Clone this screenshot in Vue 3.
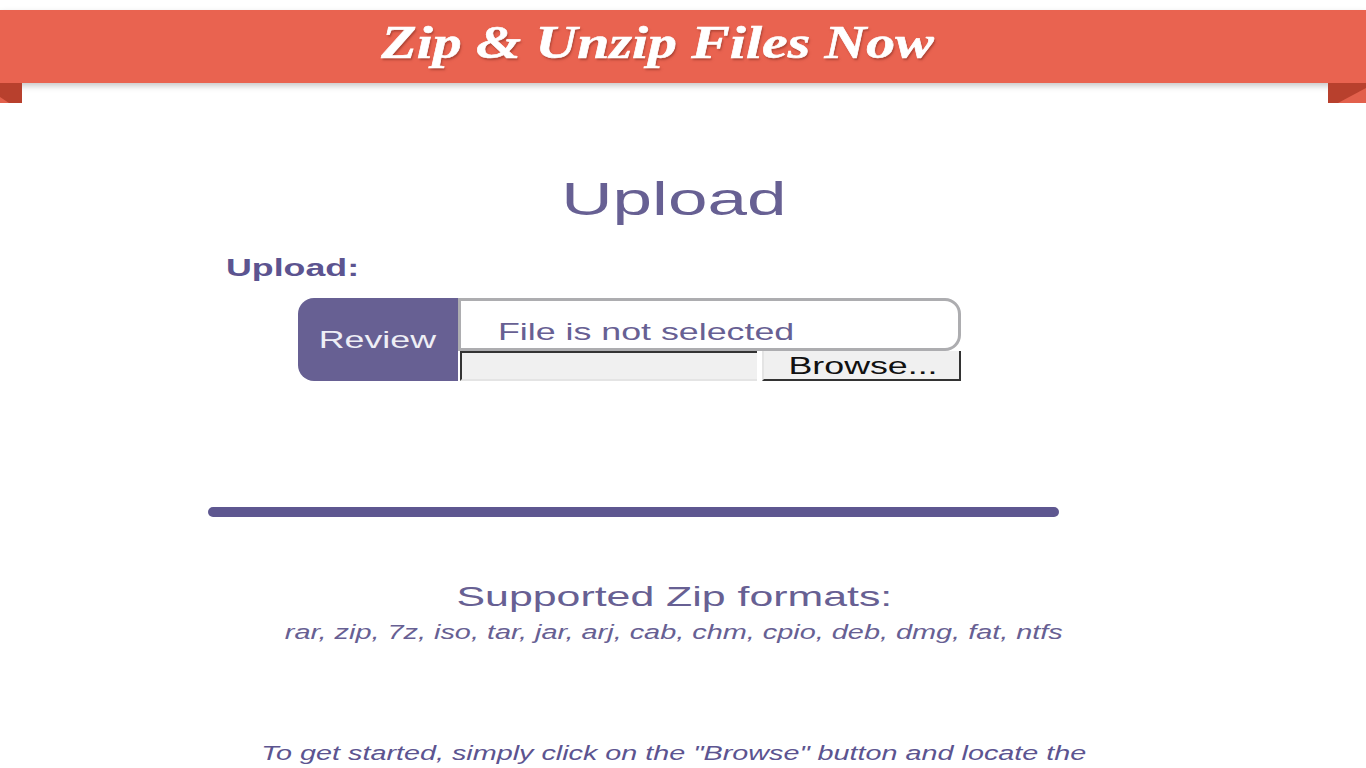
<template>
  <div class="page">
    <header class="banner">
      <h1 class="banner-title">Zip &amp; Unzip Files Now</h1>
      <svg class="fold fold-left" viewBox="0 0 22 20" preserveAspectRatio="none">
        <rect width="22" height="20" fill="#b8402d" />
        <polygon points="0,14 9,20 0,20" fill="#e2604c" />
      </svg>
      <svg class="fold fold-right" viewBox="0 0 38 20" preserveAspectRatio="none">
        <rect width="38" height="20" fill="#b8402d" />
        <polygon points="10,20 38,5 38,20" fill="#e2604c" />
      </svg>
    </header>

    <main class="content">
      <h2 class="heading"><span class="wide">Upload</span></h2>
      <div class="label"><span class="wide wide-left">Upload:</span></div>

      <div class="uploader">
        <div class="review"><span class="wide">Review</span></div>
        <div class="file-column">
          <div class="file-name"><span class="wide wide-left">File is not selected</span></div>
          <div class="file-input">
            <div class="file-field"></div>
            <div class="browse"><span class="wide">Browse...</span></div>
          </div>
        </div>
      </div>

      <div class="rule"></div>

      <h3 class="formats-title"><span class="wide">Supported Zip formats:</span></h3>
      <p class="formats"><span class="wide">rar, zip, 7z, iso, tar, jar, arj, cab, chm, cpio, deb, dmg, fat, ntfs</span></p>
      <p class="intro"><span class="wide">To get started, simply click on the "Browse" button and locate the</span></p>
    </main>
  </div>
</template>

<script setup>
</script>

<style>
html, body { margin: 0; background: #fff; }
</style>

<style scoped>
.page {
  width: 1366px;
  height: 768px;
  overflow: hidden;
  background: #fff;
  font-family: "Liberation Sans", Arial, sans-serif;
  color: #676093;
  padding-top: 10px;
  box-sizing: border-box;
}
.wide {
  display: inline-block;
  white-space: nowrap;
  transform: scaleX(1.49);
  transform-origin: center;
}
.wide-left { transform-origin: left center; }

.banner {
  position: relative;
  height: 73px;
  background: #e96350;
  box-shadow: 0 3px 6px rgba(0, 0, 0, 0.22);
  display: flex;
  align-items: center;
  justify-content: center;
}
.banner-title {
  margin: 0 0 10px -51px;
  font-family: "Liberation Serif", serif;
  font-style: italic;
  font-weight: 700;
  font-size: 47px;
  line-height: 64px;
  color: #fff;
  white-space: nowrap;
  -webkit-text-stroke: 0.6px #fff;
  text-shadow: 1px 2px 2px rgba(120, 40, 30, 0.55);
  transform: scaleX(1.23);
}
.fold {
  position: absolute;
  top: 73px;
  height: 20px;
  display: block;
}
.fold-left { left: 0; width: 22px; }
.fold-right { right: 0; width: 38px; }

.content {
  width: 932px;
  margin-left: 208px;
}
.heading {
  margin: 0;
  padding-top: 88px;
  text-align: center;
  font-weight: 400;
  font-size: 46px;
  line-height: 56px;
}
.heading .wide { transform: scaleX(1.545); }
.label {
  margin-top: 27px;
  padding-left: 18px;
  font-weight: 700;
  font-size: 24px;
  line-height: 28px;
  color: #5c5490;
}
.uploader {
  display: flex;
  margin: 16px 0 0 90px;
  width: 663px;
  height: 83px;
  font-size: 24px;
}
.review {
  flex: 0 0 160px;
  display: flex;
  align-items: center;
  justify-content: center;
  background: #676093;
  color: #eeeef5;
  border-radius: 16px 0 0 16px;
  padding: 1px 2px 0 0;
  box-sizing: border-box;
}
.file-column {
  flex: 1;
  display: flex;
  flex-direction: column;
  min-height: 0;
}
.file-name {
  flex: 0 0 53px;
  box-sizing: border-box;
  border: 3px solid #adadb0;
  border-radius: 0 16px 16px 0;
  padding: 17px 0 0 37px;
  line-height: 28px;
  background: #fff;
  overflow: hidden;
}
.file-input {
  flex: 1;
  display: flex;
  gap: 5px;
  padding-left: 2px;
}
.file-field {
  width: 297px;
  background: #f0f0f0;
  border-top: 2px solid #333;
  border-left: 2px solid #333;
  border-bottom: 2px solid #e4e4e4;
  box-sizing: border-box;
}
.browse {
  flex: 1;
  display: flex;
  align-items: center;
  justify-content: center;
  background: #f0f0f0;
  border-left: 2px solid #e4e4e4;
  border-right: 2px solid #333;
  border-bottom: 2px solid #333;
  box-sizing: border-box;
  color: #111;
  padding: 2px 0 0 4px;
  height: 30px;
  line-height: 26px;
}
.rule {
  width: 851px;
  height: 10px;
  margin-top: 126px;
  background: #5e5790;
  border-radius: 5px;
}
.formats-title {
  margin: 63px 0 0;
  text-align: center;
  font-weight: 400;
  font-size: 28px;
  line-height: 34px;
}
.formats-title .wide { transform: scaleX(1.53); }
.formats {
  margin: 5px 0 0;
  text-align: center;
  font-style: italic;
  font-size: 19.5px;
  line-height: 26px;
}
.formats .wide { transform: scaleX(1.48); }
.intro {
  margin: 94px 0 0;
  text-align: center;
  font-style: italic;
  font-size: 19.5px;
  line-height: 28px;
  color: #5c5490;
}
.intro .wide { transform: scaleX(1.475); }
</style>
